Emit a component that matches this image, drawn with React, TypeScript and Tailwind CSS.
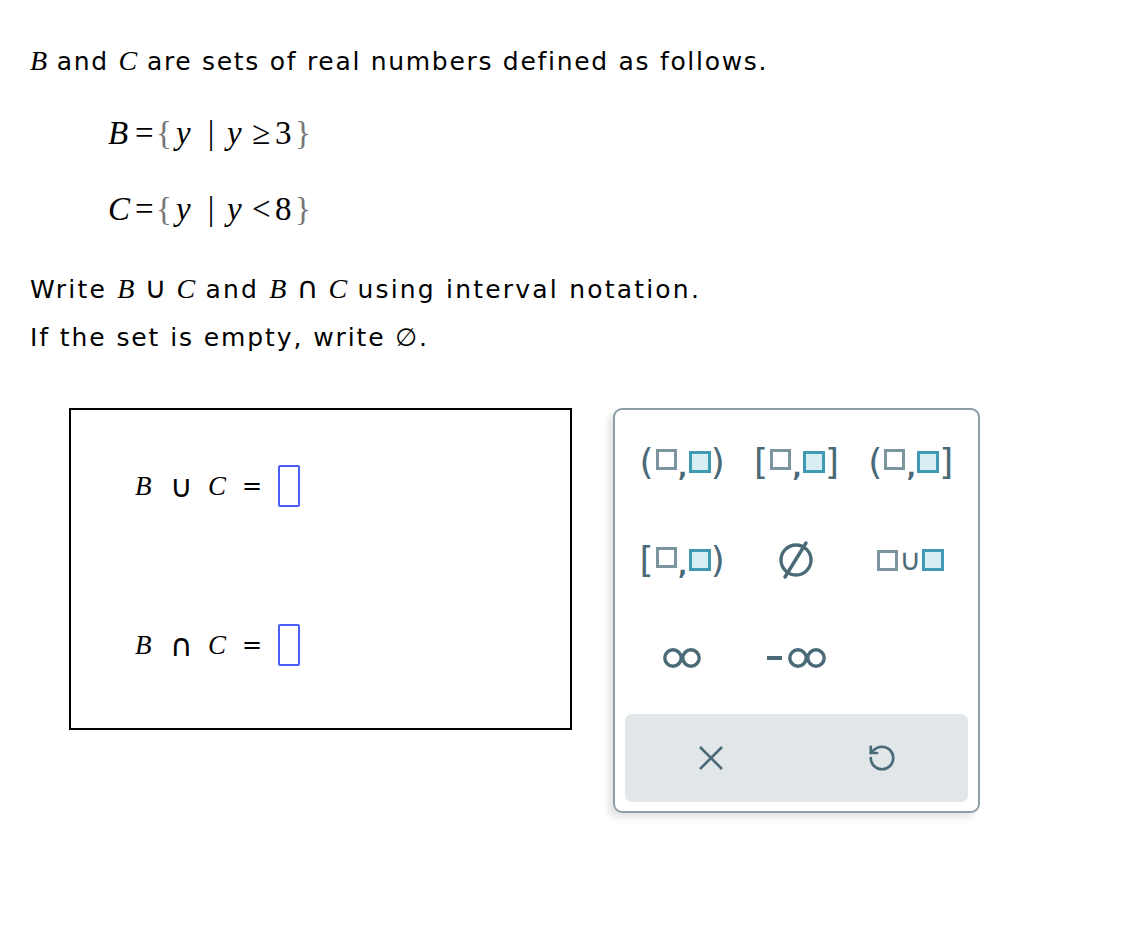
import React from 'react'
import { RotateCcw } from 'lucide-react'

const serif = "font-['Liberation_Serif',serif]"

const Sq = ({ blue }: { blue?: boolean }) => (
  <span
    className={
      blue
        ? 'inline-block h-[22px] w-[22px] border-[3px] border-[#3f9ab4] bg-[#d6eef4]'
        : 'inline-block h-[21px] w-[21px] border-[3px] border-[#7c949e] bg-white'
    }
  />
)

const Paren = ({ ch }: { ch: string }) => (
  <span className="font-['DejaVu_Sans',sans-serif] text-[36px] leading-none text-[#4b6a77]">{ch}</span>
)

const Interval = ({ left, right }: { left: string; right: string }) => (
  <div className="flex items-center">
    <Paren ch={left} />
    <span className="ml-[2px]">
      <Sq />
    </span>
    <span className="mt-[12px] w-[12px] text-center font-['DejaVu_Sans',sans-serif] text-[24px] font-bold leading-none text-[#4b6a77]">,</span>
    <Sq blue />
    <Paren ch={right} />
  </div>
)

const Infinity = () => (
  <svg width="38" height="22" viewBox="0 0 38 22" fill="none" stroke="#4b6a77" strokeWidth="3.4">
    <circle cx="10" cy="11" r="8.2" />
    <circle cx="28" cy="11" r="8.2" />
  </svg>
)

const AnswerRow = ({ op }: { op: string }) => (
  <div className="flex items-center text-[27px] leading-none text-black">
    <span className={`${serif} w-[35px] italic`}>B</span>
    <span className="w-[38px] font-['DejaVu_Sans',sans-serif] text-[31px]">{op}</span>
    <span className={`${serif} w-[34px] italic`}>C</span>
    <span className="w-[36px] font-['DejaVu_Sans',sans-serif] text-[24px]">=</span>
    <span className="inline-block h-[42px] w-[22px] rounded-[2px] border-2 border-[#4a5ef3]" />
  </div>
)

const SetDef = ({ name, rel, num }: { name: string; rel: string; num: string }) => (
  <div className="flex items-baseline">
    <span className="w-[27px] italic">{name}</span>
    <span className="w-[21px]">=</span>
    <span className="w-[18px] text-[#777]">{'{'}</span>
    <span className="w-[26px] pl-[2px] italic">y</span>
    <span className="w-[22px] text-center">|</span>
    <span className="w-[30px] pl-[5px] italic">y</span>
    <span className="w-[23px]">{rel}</span>
    <span className="w-[20px]">{num}</span>
    <span className="text-[#777]">{'}'}</span>
  </div>
)

const I = ({ children }: { children: React.ReactNode }) => (
  <span className={`${serif} text-[28px] italic tracking-normal`}>{children}</span>
)

export default function App() {
  return (
    <div className="h-[949px] w-[1135px] bg-white font-['DejaVu_Sans',sans-serif] text-[25px] tracking-[1.7px] text-black">
      <div className="pl-[30px] pt-[47px]">
        <p className="leading-[28px]">
          <I>B</I> and <I>C</I> are sets of real numbers defined as follows.
        </p>

        <div className={`${serif} ml-[78px] mt-[37px] text-[33px] leading-[40px] tracking-normal`}>
          <SetDef name="B" rel="≥" num="3" />
          <div className="mt-[36px]">
            <SetDef name="C" rel="<" num="8" />
          </div>
        </div>

        <p className="mt-[45px] leading-[28px] tracking-[2.2px]">
          Write <I>B</I> <span className="text-[30px] tracking-normal">∪</span> <I>C</I> and <I>B</I>{' '}
          <span className="text-[30px] tracking-normal">∩</span> <I>C</I> using interval notation.
        </p>
        <p className="mt-[20px] leading-[28px] tracking-[1.9px]">If the set is empty, write ∅.</p>
      </div>

      <div className="ml-[69px] mt-[56px] flex items-start gap-[41px] tracking-normal">
        <div className="flex h-[322px] w-[503px] flex-col border-2 border-black pl-[64px] pt-[55px]">
          <AnswerRow op="∪" />
          <div className="mt-[117px]">
            <AnswerRow op="∩" />
          </div>
        </div>

        <div className="flex h-[405px] w-[367px] flex-col rounded-[9px] border-2 border-[#8a9ea6] px-[10px] pb-[9px] pt-[3px] shadow-[-5px_5px_6px_rgba(0,0,0,0.1)]">
          <div className="grid grid-cols-3">
            <div className="flex h-[98px] items-center justify-center">
              <Interval left="(" right=")" />
            </div>
            <div className="flex h-[98px] items-center justify-center">
              <Interval left="[" right="]" />
            </div>
            <div className="flex h-[98px] items-center justify-center">
              <Interval left="(" right="]" />
            </div>

            <div className="flex h-[98px] items-center justify-center">
              <Interval left="[" right=")" />
            </div>
            <div className="flex h-[98px] items-center justify-center">
              <svg width="40" height="40" viewBox="0 0 40 40" fill="none" stroke="#4b6a77" strokeWidth="3.4" strokeLinecap="round">
                <circle cx="20" cy="20" r="15" />
                <line x1="9" y1="37" x2="30" y2="3" />
              </svg>
            </div>
            <div className="flex h-[98px] items-center justify-center">
              <div className="flex items-center">
                <Sq />
                <span className="mx-[1px] font-['DejaVu_Sans',sans-serif] text-[30px] leading-none text-[#4b6a77]">∪</span>
                <Sq blue />
              </div>
            </div>

            <div className="flex h-[98px] items-center justify-center">
              <Infinity />
            </div>
            <div className="flex h-[98px] items-center justify-center">
              <div className="flex items-center gap-[6px]">
                <span className="block h-[3.5px] w-[15px] bg-[#4b6a77]" />
                <Infinity />
              </div>
            </div>
            <div className="h-[98px]" />
          </div>

          <div className="mt-auto grid h-[88px] grid-cols-2 rounded-[7px] bg-[#e1e6e9]">
            <div className="flex items-center justify-center">
              <svg width="26" height="26" viewBox="0 0 26 26" fill="none" stroke="#4b6a77" strokeWidth="2.6">
                <line x1="2" y1="2" x2="24" y2="24" />
                <line x1="24" y1="2" x2="2" y2="24" />
              </svg>
            </div>
            <div className="flex items-center justify-center">
              <RotateCcw size={30} strokeWidth={2.1} color="#4b6a77" />
            </div>
          </div>
        </div>
      </div>
    </div>
  )
}
